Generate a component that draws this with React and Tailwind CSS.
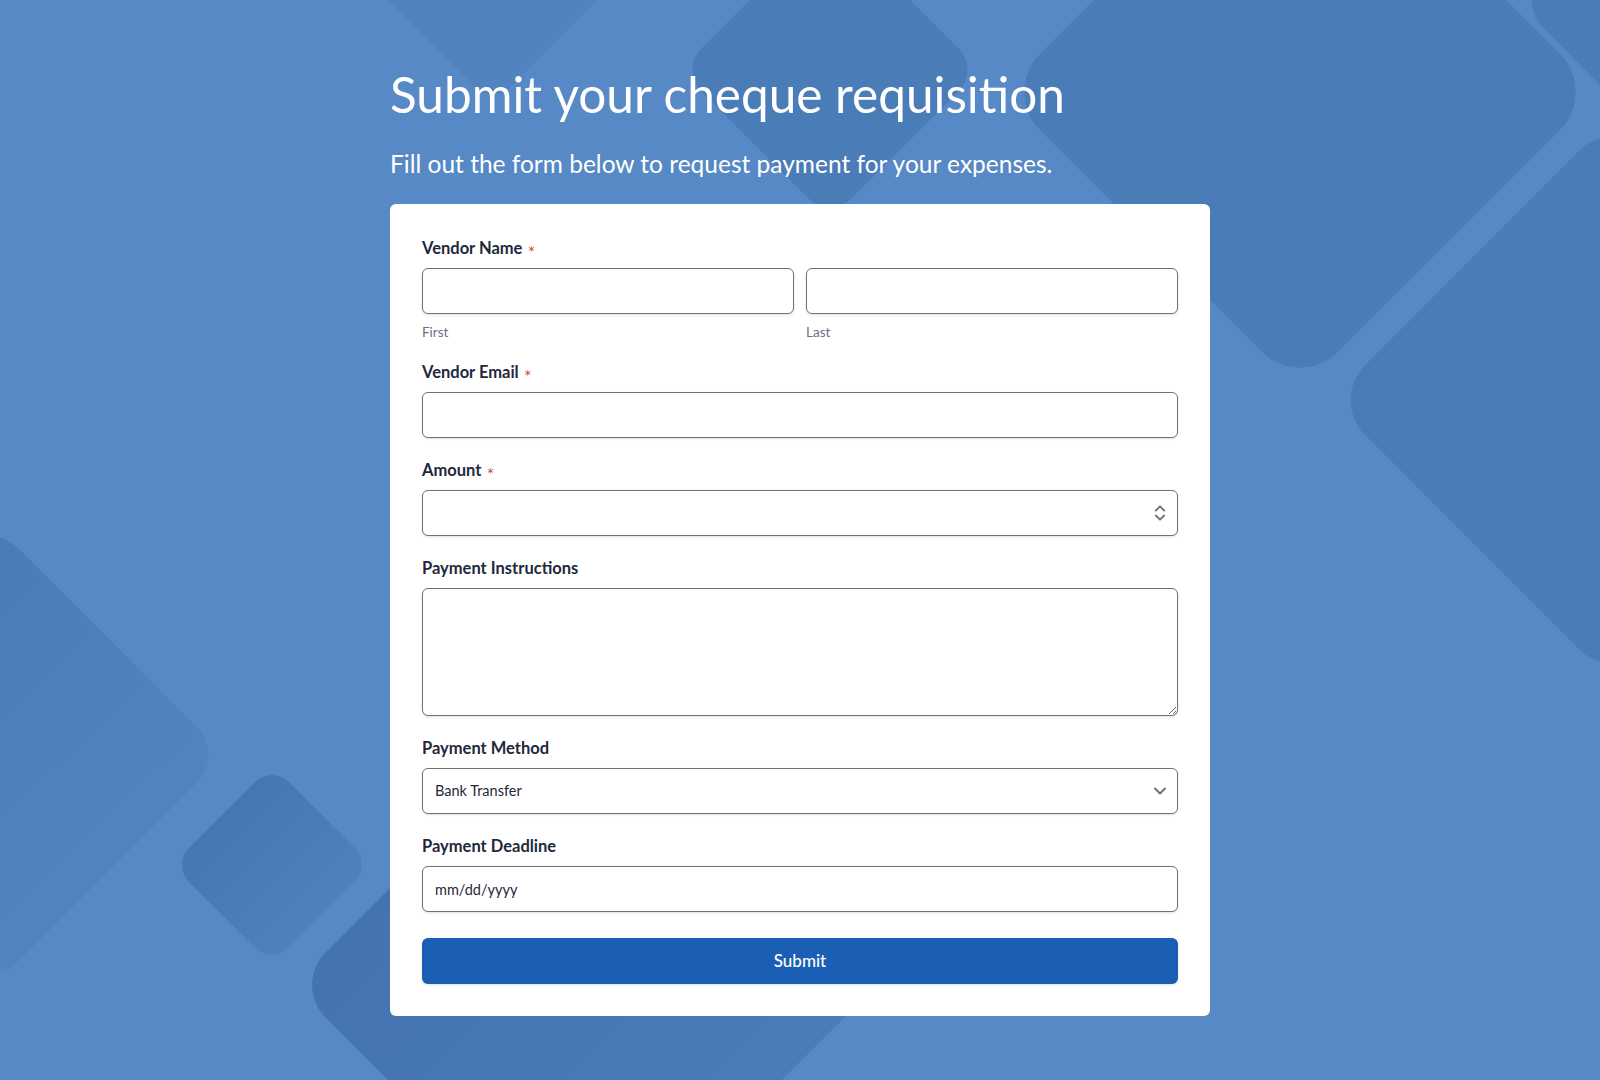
import { ChevronDown, ChevronsUpDown } from "lucide-react";

// rounded squares turned 45°, given by centre and half-diagonal
const tiles = [
  { cx: 493, cy: -20, d: 125, r: 26, fill: "#5083bf" },
  { cx: 830, cy: 70, d: 150, r: 30, fill: "#4a7cb8" },
  { cx: 1300, cy: 92, d: 298, r: 54, fill: "#4a7cb8" },
  { cx: 1735, cy: 0, d: 220, r: 40, fill: "#4b7db9" },
  { cx: 1615, cy: 400, d: 285, r: 50, fill: "#4a7cb8" },
  { cx: -10, cy: 755, d: 235, r: 40, fill: "url(#fadeLeft)" },
  { cx: 272, cy: 865, d: 100, r: 24, fill: "url(#fadeSmall)" },
  { cx: 585, cy: 985, d: 292, r: 46, fill: "url(#fadeBottom)" },
];

function Backdrop() {
  return (
    <svg
      className="absolute inset-0 w-full h-full pointer-events-none"
      viewBox="0 0 1600 1080"
      preserveAspectRatio="xMidYMid slice"
    >
      <defs>
        <linearGradient id="fadeLeft" x1="0" x2="1" y1="0" y2="0">
          <stop offset="0" stopColor="#4a7bb7" />
          <stop offset="1" stopColor="#5384c0" />
        </linearGradient>
        <linearGradient id="fadeSmall" x1="0" x2="1" y1="0" y2="0">
          <stop offset="0" stopColor="#4677b3" />
          <stop offset="1" stopColor="#4f81bd" />
        </linearGradient>
        <linearGradient id="fadeBottom" x1="0" x2="1" y1="0" y2="0">
          <stop offset="0" stopColor="#4473b0" />
          <stop offset="1" stopColor="#4b7cb8" />
        </linearGradient>
      </defs>
      {tiles.map((t, i) => {
        const s = t.d * Math.SQRT2;
        return (
          <rect
            key={i}
            x={t.cx - s / 2}
            y={t.cy - s / 2}
            width={s}
            height={s}
            rx={t.r}
            fill={t.fill}
            transform={`rotate(45 ${t.cx} ${t.cy})`}
          />
        );
      })}
    </svg>
  );
}

function Label({ children, required }) {
  return (
    <label className="block mb-2 text-[16.5px] leading-6 font-bold text-[#1e293b]">
      {children}
      {required && (
        <span className="inline-block ml-1.5 font-['DejaVu_Sans',sans-serif] text-[12px] leading-none font-normal text-[#d63b2f] translate-y-[1px]">
          *
        </span>
      )}
    </label>
  );
}

const field =
  "block w-full h-[46px] rounded-md border border-[#6b7280] bg-white px-3 text-[14.5px] text-[#1f2937] shadow-sm outline-none";

export default function App() {
  return (
    <div className="relative min-h-[1080px] overflow-hidden bg-[#5689c5] font-['Lato',sans-serif]">
      <Backdrop />

      <div className="relative w-[820px] mx-auto pt-[70px] pb-16">
        <h1 className="text-[49.5px] leading-[48px] font-normal text-white">
          Submit your cheque requisition
        </h1>
        <p className="mt-[30px] text-[24.5px] leading-8 text-white">
          Fill out the form below to request payment for your expenses.
        </p>

        <form
          className="mt-6 rounded-md bg-white p-8 flex flex-col gap-5"
          onSubmit={(e) => e.preventDefault()}
        >
          <div>
            <Label required>Vendor Name</Label>
            <div className="grid grid-cols-2 gap-3">
              <div>
                <input type="text" className={field} />
                <div className="mt-2.5 text-[13.5px] leading-4 text-[#6b7280]">First</div>
              </div>
              <div>
                <input type="text" className={field} />
                <div className="mt-2.5 text-[13.5px] leading-4 text-[#6b7280]">Last</div>
              </div>
            </div>
          </div>

          <div>
            <Label required>Vendor Email</Label>
            <input type="email" className={field} />
          </div>

          <div>
            <Label required>Amount</Label>
            <div className="relative">
              <input
                type="number"
                className={`${field} [appearance:textfield] [&::-webkit-inner-spin-button]:appearance-none [&::-webkit-outer-spin-button]:appearance-none`}
              />
              <ChevronsUpDown
                size={20}
                strokeWidth={2.2}
                className="absolute right-[8px] top-1/2 -translate-y-1/2 text-[#6b7280]"
              />
            </div>
          </div>

          <div>
            <Label>Payment Instructions</Label>
            <textarea className="block w-full h-[128px] rounded-md border border-[#6b7280] bg-white px-3 py-2 text-sm shadow-sm outline-none" />
          </div>

          <div>
            <Label>Payment Method</Label>
            <div className="relative">
              <select className={`${field} appearance-none`} defaultValue="bank">
                <option value="bank">Bank Transfer</option>
                <option value="cheque">Cheque</option>
                <option value="cash">Cash</option>
              </select>
              <ChevronDown
                size={20}
                strokeWidth={2.4}
                className="absolute right-[8px] top-1/2 -translate-y-1/2 text-[#6b7280]"
              />
            </div>
          </div>

          <div>
            <Label>Payment Deadline</Label>
            <input type="text" placeholder="mm/dd/yyyy" className={`${field} placeholder:text-[#1f2937]`} />
          </div>

          <button
            type="submit"
            className="mt-1.5 h-[46px] w-full rounded-md bg-[#1a5fb4] text-[17px] font-medium text-white shadow-sm"
          >
            Submit
          </button>
        </form>
      </div>
    </div>
  );
}
